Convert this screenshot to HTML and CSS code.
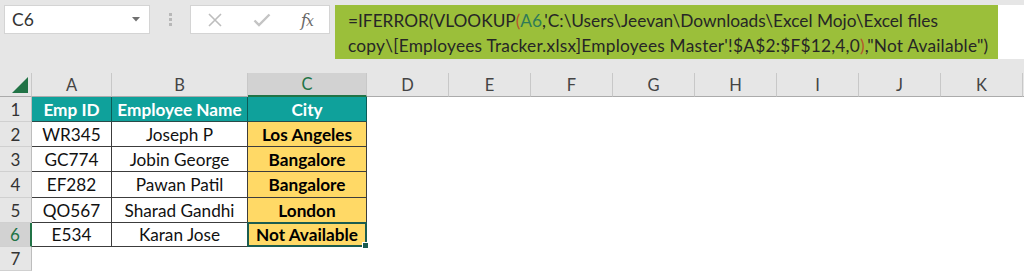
FILE: index.html
```html
<!DOCTYPE html>
<html>
<head>
<meta charset="utf-8">
<link rel="stylesheet" href="styles.css">
</head>
<body>
<div class="topbar">
  <div class="namebox">
    <span class="nb-text">C6</span>
    <svg class="nb-arrow" width="8" height="5" viewBox="0 0 8 5"><path d="M0 0H8L4 4.5Z" fill="#707070"/></svg>
  </div>
  <div class="grip"><span></span><span></span><span></span></div>
  <div class="fxbox">
    <svg class="ico" width="16" height="16" viewBox="0 0 16 16"><path d="M2 2L14 14M14 2L2 14" stroke="#bdbdbd" stroke-width="1.6" fill="none"/></svg>
    <svg class="ico" width="18" height="16" viewBox="0 0 18 16"><path d="M1.5 8.5L6 13L16.5 2.5" stroke="#c4c4c4" stroke-width="2.4" fill="none"/></svg>
    <span class="fx">f<i>x</i></span>
  </div>
  <div class="formula">
    <div class="ftext">=IFERROR(VLOOKUP<span class="paren">(</span><span class="ref">A6</span>,'C:\Users\Jeevan\Downloads\Excel Mojo\Excel files<br><span class="l2">copy\[Employees Tracker.xlsx]Employees Master'!$A$2:$F$12,4,0<span class="paren">)</span>,"Not Available")</span></div>
  </div>
  <div class="fend"></div>
</div>

<div class="sheet">
  <div class="ch corner"><svg width="18" height="18" viewBox="0 0 18 18"><path d="M17 1V17H1Z" fill="#217346"/></svg></div>
  <div class="ch">A</div>
  <div class="ch">B</div>
  <div class="ch ch-sel">C</div>
  <div class="ch">D</div>
  <div class="ch">E</div>
  <div class="ch">F</div>
  <div class="ch">G</div>
  <div class="ch">H</div>
  <div class="ch">I</div>
  <div class="ch">J</div>
  <div class="ch">K</div>
  <div class="ch last"></div>

  <div class="rh">1</div>
  <div class="c hd">Emp ID</div>
  <div class="c hd">Employee Name</div>
  <div class="c hd">City</div>
  <div class="e span"></div>

  <div class="rh">2</div>
  <div class="c">WR345</div>
  <div class="c">Joseph P</div>
  <div class="c city">Los Angeles</div>
  <div class="e span"></div>

  <div class="rh">3</div>
  <div class="c">GC774</div>
  <div class="c">Jobin George</div>
  <div class="c city">Bangalore</div>
  <div class="e span"></div>

  <div class="rh">4</div>
  <div class="c">EF282</div>
  <div class="c">Pawan Patil</div>
  <div class="c city">Bangalore</div>
  <div class="e span"></div>

  <div class="rh">5</div>
  <div class="c">QO567</div>
  <div class="c">Sharad Gandhi</div>
  <div class="c city">London</div>
  <div class="e span"></div>

  <div class="rh rh-sel">6</div>
  <div class="c">E534</div>
  <div class="c">Karan Jose</div>
  <div class="c city sel">Not Available<span class="handle"></span></div>
  <div class="e span"></div>

  <div class="rh">7</div>
  <div class="e span4"></div>
</div>
</body>
</html>
```

FILE: styles.css
```css
html, body {
  margin: 0;
  padding: 0;
}
body {
  width: 1024px;
  height: 271px;
  overflow: hidden;
  background: #e6e6e6;
  font-family: Lato, "Open Sans", sans-serif;
  color: #000;
}
.topbar {
  display: flex;
  align-items: flex-start;
  height: 73px;
  padding-top: 5px;
  box-sizing: border-box;
}
.namebox {
  margin-left: 4px;
  width: 146px;
  height: 29px;
  box-sizing: border-box;
  background: #fff;
  border: 1px solid #d4d4d4;
  display: flex;
  align-items: center;
  justify-content: space-between;
  padding: 0 9px 0 7px;
}
.nb-text {
  font-size: 17.5px;
  color: #333;
}
.grip {
  width: 40px;
  height: 29px;
  display: flex;
  flex-direction: column;
  align-items: center;
  justify-content: center;
  gap: 2px;
}
.grip span {
  width: 3px;
  height: 3px;
  background: #b8b8b8;
}
.fxbox {
  width: 140px;
  height: 29px;
  box-sizing: border-box;
  background: #fff;
  border: 1px solid #d4d4d4;
  display: flex;
  align-items: center;
  padding: 0 16px 0 16px;
  justify-content: space-between;
}
.fx {
  font-family: "DejaVu Serif", "Liberation Serif", serif;
  font-style: italic;
  font-size: 17px;
  color: #6a6a6a;
  letter-spacing: -1px;
}
.fx i {
  font-size: 14px;
}
.formula {
  margin-left: 5px;
  width: 663px;
  height: 54px;
  background: #9bbf3a;
  box-sizing: border-box;
  padding: 3px 0 0 13px;
}
.ftext {
  font-size: 17.3px;
  line-height: 25px;
  color: #262626;
  white-space: nowrap;
}
.l2 { letter-spacing: 0.22px; }
.paren { color: #b5542c; }
.ref { color: #2f7a58; }
.fend {
  width: 26px;
  height: 54px;
  background: #fff;
}

.sheet {
  display: grid;
  grid-template-columns: 32px 80px 136px 119px 82px 82px 82px 82px 82px 82px 82px 82px 1px;
  grid-template-rows: 24px 25px 25px 25px 26px 25px 24px 24px;
  background: #fff;
}
.ch {
  background: #e6e6e6;
  border-right: 1px solid #c8c8c8;
  border-bottom: 1px solid #ababab;
  box-sizing: border-box;
  display: flex;
  align-items: center;
  justify-content: center;
  font-size: 16.5px;
  color: #444;
}
.ch.last { border-right: none; }
.corner {
  justify-content: flex-end;
  align-items: flex-end;
  padding: 0 2px 2px 0;
}
.ch-sel {
  background: #d2d2d2;
  color: #217346;
  border-bottom: 2px solid #217346;
}
.rh {
  background: #e6e6e6;
  border-right: 1px solid #bdbdbd;
  border-bottom: 1px solid #d0d0d0;
  box-sizing: border-box;
  display: flex;
  align-items: center;
  justify-content: center;
  font-size: 17px;
  color: #333;
}
.rh-sel {
  background: #d2d2d2;
  color: #217346;
  border-right: 2px solid #217346;
}
.c {
  box-sizing: border-box;
  border-right: 1px solid #3c3c3c;
  border-bottom: 1px solid #3c3c3c;
  display: flex;
  align-items: center;
  justify-content: center;
  font-size: 17.2px;
  color: #111;
  position: relative;
  white-space: nowrap;
}
.hd {
  background: #0fa19b;
  color: #fff;
  font-weight: bold;
  border-right-color: #0b5c58;
  border-bottom-color: #2a4a48;
}
.city {
  background: #ffd966;
  font-weight: bold;
  color: #000;
}
.sel {
  border: 2px solid #1b5c50;
  margin: -1px 0 0 -1px;
  width: calc(100% + 1px);
  height: calc(100% + 1px);
}
.handle {
  position: absolute;
  right: -4px;
  bottom: -4px;
  width: 5px;
  height: 5px;
  background: #1b5c50;
  border: 1px solid #fff;
}
.e { background: #fff; }
.span { grid-column: span 9; }
.span4 { grid-column: span 12; }
```
